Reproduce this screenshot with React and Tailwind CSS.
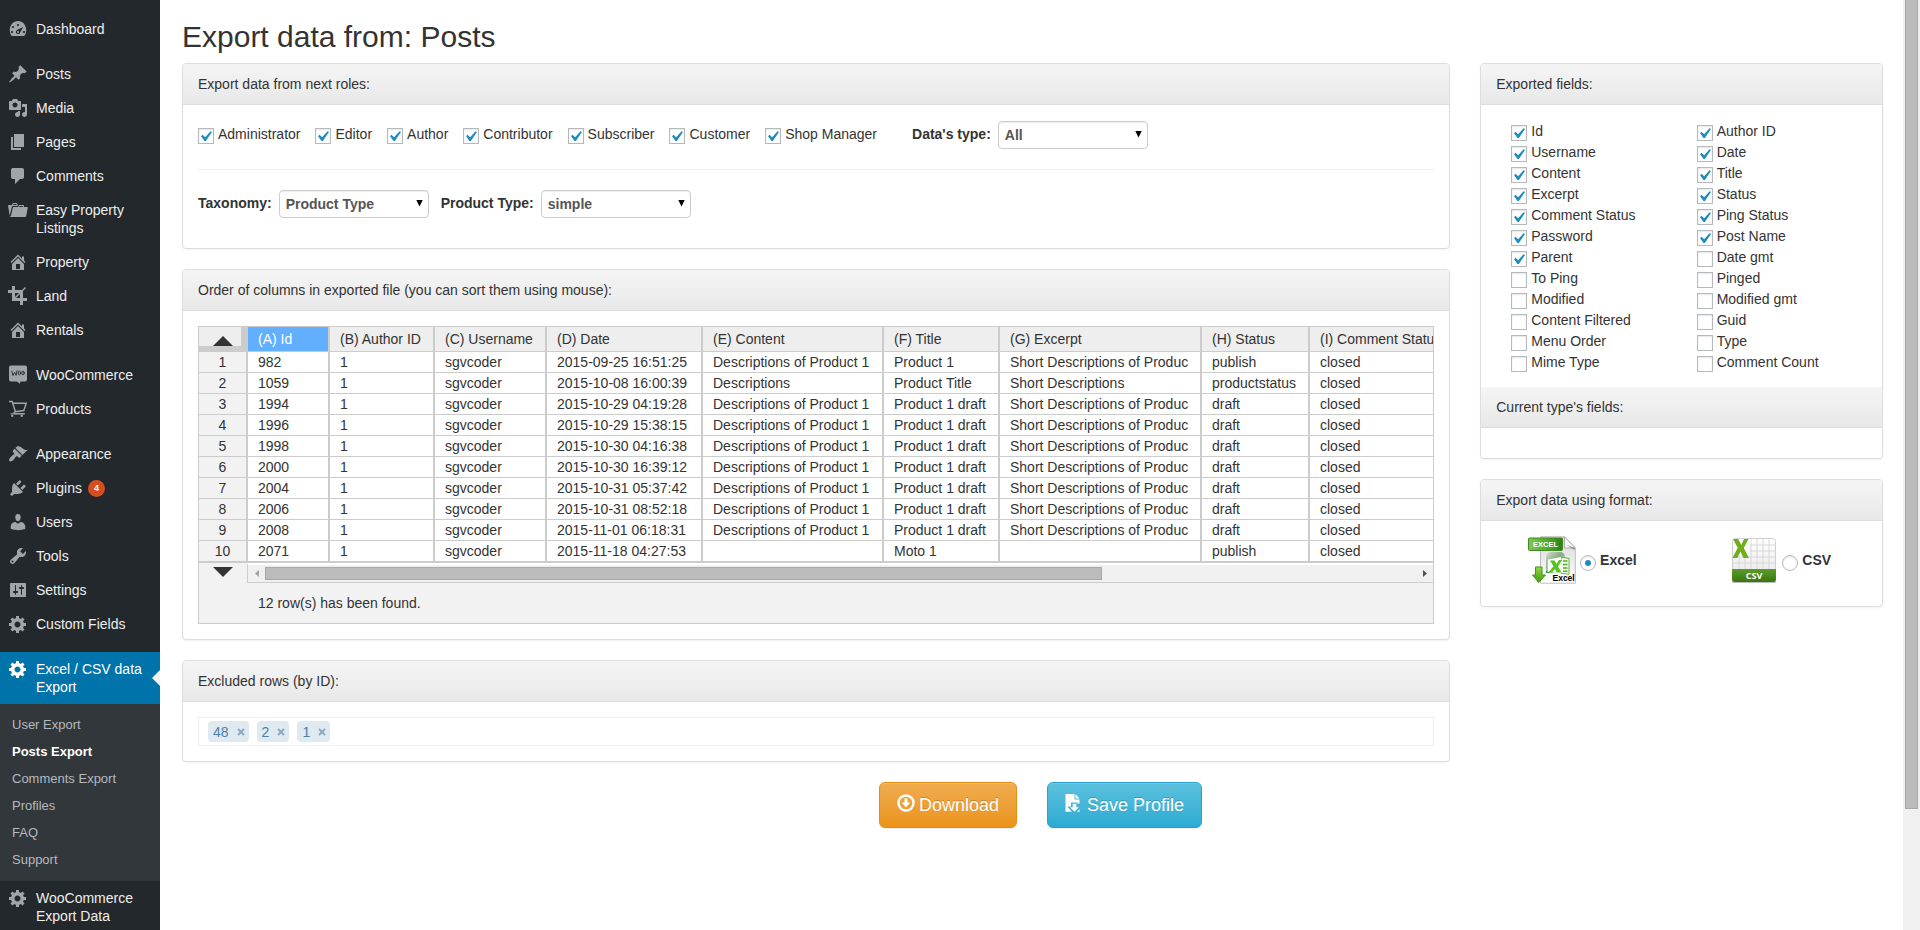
import React from "react";

const ICONS = {
  dashboard:
    "M3.76 17h12.48c1.34-1.63 2.01-3.82 2.01-6 0-5.07-3.68-9-8.25-9S1.75 5.93 1.75 11c0 2.18.67 4.37 2.01 6zM9 6c0-.55.45-1 1-1s1 .45 1 1c0 .56-.45 1-1 1s-1-.44-1-1zM4 8c0-.55.45-1 1-1s1 .45 1 1c0 .56-.45 1-1 1s-1-.44-1-1zm4.52 3.4c.84-.83 6.51-3.5 6.51-3.5s-2.66 5.68-3.49 6.51c-.84.84-2.18.84-3.02 0-.83-.83-.83-2.18 0-3.01zM3 13c0-.55.45-1 1-1s1 .45 1 1c0 .56-.45 1-1 1s-1-.44-1-1zm6 0c0-.55.45-1 1-1s1 .45 1 1c0 .56-.45 1-1 1s-1-.44-1-1zm6 0c0-.55.45-1 1-1s1 .45 1 1c0 .56-.45 1-1 1s-1-.44-1-1z",
  post: "M10.44 3.02l1.82-1.82 6.36 6.35-1.83 1.82c-1.05-.68-2.48-.57-3.41.36l-.75.75c-.92.93-1.04 2.35-.35 3.41l-1.83 1.82-2.41-2.41-2.8 2.79c-.42.42-3.38 2.71-3.8 2.29s1.86-3.39 2.28-3.81l2.79-2.79L4.1 9.36l1.83-1.82c1.05.69 2.48.57 3.4-.36l.75-.75c.93-.92 1.05-2.35.36-3.41z",
  media:
    "M13 11V4c0-.55-.45-1-1-1h-1.67L9 1H5L3.67 3H2c-.55 0-1 .45-1 1v7c0 .55.45 1 1 1h10c.55 0 1-.45 1-1zM7 4.5c1.38 0 2.5 1.12 2.5 2.5S8.38 9.5 7 9.5 4.5 8.38 4.5 7 5.62 4.5 7 4.5zM14 6h5v10.5c0 1.38-1.12 2.5-2.5 2.5S14 17.88 14 16.5s1.12-2.5 2.5-2.5c.17 0 .34.02.5.05V9h-3V6zm-4 8.05V13h2v3.5c0 1.38-1.12 2.5-2.5 2.5S7 17.88 7 16.5 8.12 14 9.5 14c.17 0 .34.02.5.05z",
  page: "M6 15V2h10v13H6zm-1 1h8v2H3V5h2v11z",
  comments:
    "M5 2h9c1.1 0 2 .9 2 2v7c0 1.1-.9 2-2 2h-2l-5 5v-5H5c-1.1 0-2-.9-2-2V4c0-1.1.9-2 2-2z",
  portfolio:
    "M4 5H.78c-.37 0-.74.32-.69.84l1.56 9.99S3.5 8.47 3.86 6.7c.11-.53.61-.7.98-.7H10s-.7-2.08-.77-2.31C9.11 3.25 8.89 3 8.45 3H5.14c-.36 0-.7.23-.8.64C4.25 4.04 4 5 4 5zm4.88 0h-4s.42-1 .87-1h2.13c.48 0 1 1 1 1zM2.67 16.25c-.31.47-.76.75-1.26.75h15.73c.54 0 .92-.31 1.03-.83.44-2.19 1.68-8.44 1.68-8.44.07-.5-.3-.73-.62-.73H16V5.53c0-.16-.26-.53-.66-.53h-3.76c-.52 0-.87.58-.87.58L10 7H5.59c-.32 0-.63.19-.69.5 0 0-1.59 6.7-1.72 7.33-.07.37-.22.99-.51 1.42zM15.38 7H11s.58-1 1.13-1h2.29c.71 0 .96 1 .96 1z",
  home: "M16 8.5l1.53 1.53-1.06 1.06L10 4.6l-6.47 6.49-1.06-1.06L10 2.5l4 4v-2h2v4zm-6-2.46l6 5.99V18H4v-5.97zM12 17v-5H8v5h4z",
  crop: "M19 12v3h-4v4h-3v-4H4V7H0V4h4V0h3v4h7l3-3 1 1-3 3v7h4zm-8-5H7v4zm-3 5h4V8z",
  appearance:
    "M14.48 11.06L7.41 3.99l1.5-1.5c.5-.56 2.3-.47 3.51.32 1.21.8 1.43 1.28 2.91 2.1 1.18.64 2.45 1.26 4.45.85zm-.71.71L6.7 4.7 4.93 6.47c-.39.39-.39 1.02 0 1.41l1.06 1.06c.39.39.39 1.03 0 1.42-.6.6-1.43 1.11-2.21 1.69-.35.26-.7.53-1.01.84C1.43 14.23.4 16.08 1.4 17.07c.99 1 2.84-.03 4.18-1.36.31-.31.58-.66.85-1.02.57-.78 1.08-1.61 1.69-2.21.39-.39 1.02-.39 1.41 0l1.06 1.06c.39.39 1.02.39 1.41 0z",
  plugins:
    "M13.11 4.36L9.87 7.6 8 5.73l3.24-3.24c.35-.34 1.05-.2 1.56.32.52.51.66 1.21.31 1.55zm-8 1.77l.91-1.12 9.01 9.01-1.19.84c-.71.71-2.63 1.16-3.82 1.16H6.14L4.9 17.26c-.59.59-1.54.59-2.12 0-.59-.58-.59-1.53 0-2.12l1.24-1.24v-3.88c0-1.13.4-3.19 1.09-3.89zm7.26 3.97l3.24-3.24c.34-.35 1.04-.21 1.55.31.52.51.66 1.21.31 1.55l-3.24 3.25z",
  users:
    "M10 9.25c-2.27 0-2.73-3.44-2.73-3.44C7 4.02 7.82 2 9.97 2c2.16 0 2.98 2.02 2.71 3.81 0 0-.41 3.44-2.68 3.44zm0 2.57L12.72 10c2.39 0 4.52 2.33 4.52 4.53v2.49s-3.65 1.13-7.24 1.13c-3.65 0-7.24-1.13-7.24-1.13v-2.49c0-2.25 1.94-4.48 4.47-4.48z",
  tools:
    "M16.68 9.77c-1.34 1.34-3.3 1.67-4.95.99l-5.41 6.52c-.99.99-2.59.99-3.58 0s-.99-2.59 0-3.57l6.52-5.42c-.68-1.65-.35-3.61.99-4.95 1.28-1.28 3.12-1.62 4.72-1.06l-2.89 2.89 2.82 2.82 2.86-2.87c.53 1.58.18 3.39-1.08 4.65zM3.81 16.21c.4.39 1.04.39 1.43 0 .4-.4.4-1.04 0-1.43-.39-.4-1.03-.4-1.43 0-.39.39-.39 1.03 0 1.43z",
  settings:
    "M18 16V4c0-.55-.45-1-1-1H3c-.55 0-1 .45-1 1v12c0 .55.45 1 1 1h14c.55 0 1-.45 1-1zM8 11h1c.55 0 1 .45 1 1s-.45 1-1 1H8v1.5c0 .28-.22.5-.5.5s-.5-.22-.5-.5V13H6c-.55 0-1-.45-1-1s.45-1 1-1h1V5.5c0-.28.22-.5.5-.5s.5.22.5.5V11zm5-2h-1c-.55 0-1-.45-1-1s.45-1 1-1h1V5.5c0-.28.22-.5.5-.5s.5.22.5.5V7h1c.55 0 1 .45 1 1s-.45 1-1 1h-1v5.5c0 .28-.22.5-.5.5s-.5-.22-.5-.5V9z",
  generic:
    "M18 12h-2.18c-.17.7-.44 1.35-.81 1.93l1.54 1.54-2.1 2.1-1.54-1.54c-.58.36-1.23.63-1.91.79V19H8v-2.18c-.68-.16-1.33-.43-1.91-.79l-1.54 1.54-2.12-2.12 1.54-1.54c-.36-.58-.63-1.23-.79-1.91H1V9.03h2.17c.16-.7.44-1.35.8-1.94L2.43 5.55l2.1-2.1 1.54 1.54c.58-.37 1.24-.64 1.93-.81V2h3v2.18c.68.16 1.33.43 1.91.79l1.54-1.54 2.12 2.12-1.54 1.54c.36.59.64 1.24.8 1.94H18V12zm-8.5 1.5c1.66 0 3-1.34 3-3s-1.34-3-3-3-3 1.34-3 3 1.34 3 3 3z",
};

function MenuIcon({ name }) {
  if (name === "woo") {
    return (
      <svg viewBox="0 0 20 20" className="h-5 w-5">
        <path
          fill="currentColor"
          d="M3 0.5h14a2 2 0 0 1 2 2v12a2 2 0 0 1-2 2h-4.500l-.6 2.300-3-2.300H3a2 2 0 0 1-2-2v-12a2 2 0 0 1 2-2z"
        />
        <g fill="none" stroke="#23282d" strokeWidth="0.900" strokeLinecap="round" strokeLinejoin="round">
          <path d="M3.800 6.200l1.200 4.300 1.700-3.100 1.400 2.900 1-4.500" />
          <ellipse cx="11.400" cy="8" rx="1.200" ry="1.900" />
          <ellipse cx="15" cy="8" rx="1.200" ry="1.900" />
        </g>
      </svg>
    );
  }
  if (name === "cart") {
    return (
      <svg viewBox="0 0 20 20" className="h-5 w-5" fill="none" stroke="currentColor" strokeWidth="1.400">
        <path d="M1 2.500h3.200l3.200 10.200M5 4.200h13.200l-2.400 7.300L7 12.800c-1.200.4-1.200 2 .2 2h9.600" />
        <path d="M2.500 14.800h5" strokeWidth="1" />
        <circle cx="13.800" cy="16.800" r="1.200" fill="currentColor" stroke="none" />
        <circle cx="4.200" cy="16.800" r="1.200" fill="currentColor" stroke="none" />
      </svg>
    );
  }
  return (
    <svg viewBox="0 0 20 20" className="h-5 w-5" fill="currentColor">
      <path d={ICONS[name]} />
    </svg>
  );
}

function MenuItem({ icon, label, active = false, badge }) {
  return (
    <li className={active ? "relative bg-[#0073aa] text-white" : "text-[#eee]"}>
      <a href="#" className="flex items-start">
        <span className={active ? "flex w-9 shrink-0 justify-center py-[7px] text-white" : "flex w-9 shrink-0 justify-center py-[7px] text-[#a0a5aa]"}>
          <MenuIcon name={icon} />
        </span>
        <span className="flex items-center gap-1.5 py-2 pr-2 text-sm leading-[18px]">
          {label}
          {badge && (
            <span className="flex h-[17px] w-[17px] items-center justify-center rounded-full bg-[#d54e21] text-[9px] font-bold text-white">
              {badge}
            </span>
          )}
        </span>
      </a>
      {active && (
        <svg viewBox="0 0 8 16" className="absolute top-[18px] right-0 h-4 w-2" fill="#f1f1f1">
          <path d="M8 0L0 8l8 8z" />
        </svg>
      )}
    </li>
  );
}

const MENU_GROUPS = [
  [["dashboard", "Dashboard"]],
  [
    ["post", "Posts"],
    ["media", "Media"],
    ["page", "Pages"],
    ["comments", "Comments"],
    ["portfolio", "Easy Property Listings"],
    ["home", "Property"],
    ["crop", "Land"],
    ["home", "Rentals"],
  ],
  [
    ["woo", "WooCommerce"],
    ["cart", "Products"],
  ],
  [
    ["appearance", "Appearance"],
    ["plugins", "Plugins", "4"],
    ["users", "Users"],
    ["tools", "Tools"],
    ["settings", "Settings"],
    ["generic", "Custom Fields"],
  ],
];

const SUBMENU = ["User Export", "Posts Export", "Comments Export", "Profiles", "FAQ", "Support"];

function Sidebar() {
  return (
    <nav className="w-40 shrink-0 bg-[#23282d] pt-3">
      <div className="flex flex-col gap-[11px]">
        {MENU_GROUPS.map((group, i) => (
          <ul key={i}>
            {group.map(([icon, label, badge]) => (
              <MenuItem key={label} icon={icon} label={label} badge={badge} />
            ))}
          </ul>
        ))}
        <ul>
          <MenuItem icon="generic" label="Excel / CSV data Export" active />
          <li className="bg-[#32373c] pt-[7px] pb-2">
            <ul>
              {SUBMENU.map((label) => (
                <li key={label}>
                  <a
                    href="#"
                    className={
                      label === "Posts Export"
                        ? "block px-3 text-[13px] leading-[27px] font-bold text-white"
                        : "block px-3 text-[13px] leading-[27px] text-[#b4b9be]"
                    }
                  >
                    {label}
                  </a>
                </li>
              ))}
            </ul>
          </li>
          <MenuItem icon="generic" label="WooCommerce Export Data" />
        </ul>
      </div>
    </nav>
  );
}

function PanelHeading({ children }) {
  return (
    <h2 className="border-b border-[#ddd] bg-gradient-to-b from-[#f5f5f5] to-[#e8e8e8] px-[15px] py-2.5 text-sm leading-5">
      {children}
    </h2>
  );
}

function Panel({ children }) {
  return (
    <section className="mb-5 overflow-hidden rounded border border-[#ddd] bg-white shadow-[0_1px_2px_rgba(0,0,0,0.05)]">
      {children}
    </section>
  );
}

function Check({ label, checked = true }) {
  return (
    <label className="flex h-[21px] items-start gap-1 text-sm leading-[23px] whitespace-nowrap">
      <span className="relative mt-[5px] h-4 w-4 shrink-0">
        <input
          type="checkbox"
          defaultChecked={checked}
          className="peer block h-4 w-4 appearance-none border border-[#b4b9be] bg-white shadow-[inset_0_1px_2px_rgba(0,0,0,0.1)]"
        />
        <svg
          viewBox="0 0 20 20"
          className="pointer-events-none absolute -top-0.5 -left-[3px] hidden h-[21px] w-[21px] peer-checked:block"
          fill="#1e8cbe"
        >
          <path d="M14.83 4.89l1.34.94-5.81 8.38H9.02L5.78 9.67l1.34-1.25 2.57 2.4z" />
        </svg>
      </span>
      {label}
    </label>
  );
}

function Dropdown({ id, label, value }) {
  return (
    <div className="flex items-start gap-[7px]">
      <label htmlFor={id} className="text-sm leading-[26px] font-bold">
        {label}
      </label>
      <div className="relative">
        <select
          id={id}
          defaultValue={value}
          className="block h-7 w-[150px] appearance-none rounded border border-[#ccc] bg-white px-1.5 text-sm font-bold text-[#555] shadow-[inset_0_1px_1px_rgba(0,0,0,0.07)]"
        >
          <option>{value}</option>
        </select>
        <svg viewBox="0 0 7 7" className="pointer-events-none absolute top-2.5 right-1.5 h-[7px] w-[7px]">
          <path d="M0.300 0h6.400L3.500 6.600z" />
        </svg>
      </div>
    </div>
  );
}

const ROLES = ["Administrator", "Editor", "Author", "Contributor", "Subscriber", "Customer", "Shop Manager"];

const COLUMNS = [
  ["(A) Id", "w-[82px]"],
  ["(B) Author ID", "w-[105px]"],
  ["(C) Username", "w-[112px]"],
  ["(D) Date", "w-[156px]"],
  ["(E) Content", "w-[181px]"],
  ["(F) Title", "w-[116px]"],
  ["(G) Excerpt", "w-[202px]"],
  ["(H) Status", "w-[108px]"],
  ["(I) Comment Status", "w-[160px]"],
];

const LONG = "Descriptions of Product 1";
const SHORT = "Short Descriptions of Produc";
const DRAFT = "Product 1 draft";

const ROWS = [
  ["982", "1", "sgvcoder", "2015-09-25 16:51:25", LONG, "Product 1", SHORT, "publish", "closed"],
  ["1059", "1", "sgvcoder", "2015-10-08 16:00:39", "Descriptions", "Product Title", "Short Descriptions", "productstatus", "closed"],
  ["1994", "1", "sgvcoder", "2015-10-29 04:19:28", LONG, DRAFT, SHORT, "draft", "closed"],
  ["1996", "1", "sgvcoder", "2015-10-29 15:38:15", LONG, DRAFT, SHORT, "draft", "closed"],
  ["1998", "1", "sgvcoder", "2015-10-30 04:16:38", LONG, DRAFT, SHORT, "draft", "closed"],
  ["2000", "1", "sgvcoder", "2015-10-30 16:39:12", LONG, DRAFT, SHORT, "draft", "closed"],
  ["2004", "1", "sgvcoder", "2015-10-31 05:37:42", LONG, DRAFT, SHORT, "draft", "closed"],
  ["2006", "1", "sgvcoder", "2015-10-31 08:52:18", LONG, DRAFT, SHORT, "draft", "closed"],
  ["2008", "1", "sgvcoder", "2015-11-01 06:18:31", LONG, DRAFT, SHORT, "draft", "closed"],
  ["2071", "1", "sgvcoder", "2015-11-18 04:27:53", "", "Moto 1", "", "publish", "closed"],
];

function DataGrid() {
  return (
    <div className="overflow-hidden border border-[#ccc] bg-[#f2f2f2]">
      <div className="overflow-hidden border-b border-[#ccc]">
        <table className="w-[1271px] table-fixed border-separate border-spacing-0 text-sm">
          <thead>
            <tr className="h-[25px]">
              <th className="w-[49px] border-r-[7px] border-b-[6px] border-[#ccc] bg-[#eee] p-0 align-bottom">
                <button type="button" aria-label="Scroll up" className="ml-3.5 block h-2.5 w-5">
                  <svg viewBox="0 0 20 10" className="h-2.5 w-5" fill="#333">
                    <path d="M10 0l10 10H0z" />
                  </svg>
                </button>
              </th>
              {COLUMNS.map(([name, width], i) => (
                <th
                  key={name}
                  className={`${width} border-r-2 border-b border-[#ccc] p-0 px-2.5 text-left leading-6 font-normal whitespace-nowrap ${
                    i === 0 ? "bg-[#62afff] text-white" : "bg-[#eee]"
                  }`}
                >
                  {name}
                </th>
              ))}
            </tr>
          </thead>
          <tbody>
            {ROWS.map((row, r) => (
              <tr key={row[0]} className="h-[21px]">
                <th className="border-r-2 border-b border-[#ccc] bg-[#f2f2f2] p-0 text-center leading-5 font-normal">
                  {r + 1}
                </th>
                {row.map((cell, c) => (
                  <td key={c} className="border-r-2 border-b border-[#ccc] bg-white p-0 px-2.5 leading-5">
                    <div className="overflow-hidden whitespace-nowrap">{cell}</div>
                  </td>
                ))}
              </tr>
            ))}
          </tbody>
        </table>
      </div>
      <div className="flex h-5">
        <div className="w-12 shrink-0 pt-1">
          <button type="button" aria-label="Scroll down" className="ml-3.5 block h-2.5 w-5">
            <svg viewBox="0 0 20 10" className="h-2.5 w-5" fill="#333">
              <path d="M0 0h20L10 10z" />
            </svg>
          </button>
        </div>
        <div className="flex flex-1 items-stretch border-t-2 border-b border-l border-[#ccc] border-t-white bg-[#f0f0f0] py-0.5">
          <span className="flex w-[17px] items-center justify-center">
            <svg viewBox="0 0 4 7" className="h-[7px] w-1" fill="#a3a3a3">
              <path d="M4 0v7L0 3.500z" />
            </svg>
          </span>
          <div className="flex-1">
            <div className="h-full w-8/11 border border-[#a8a8a8] bg-[#bcbcbc]" />
          </div>
          <span className="flex w-[17px] items-center justify-center">
            <svg viewBox="0 0 4 7" className="h-[7px] w-1" fill="#505050">
              <path d="M0 0v7l4-3.500z" />
            </svg>
          </span>
        </div>
      </div>
      <p className="pt-2.5 pb-2.5 pl-[59px] text-sm leading-5">12 row(s) has been found.</p>
    </div>
  );
}

function ExcludedRows() {
  return (
    <div className="flex h-[29px] items-center gap-2 border border-[#eee] px-[9px]">
      {["48", "2", "1"].map((id) => (
        <span key={id} className="flex h-[21px] items-center gap-2 rounded-sm bg-[#dfe9f0] pr-1 pl-[5px] text-sm text-[#4b7fa8]">
          {id}
          <button type="button" aria-label={`Remove ${id}`} className="block">
            <svg viewBox="0 0 8 8" className="h-2 w-2" stroke="#87a8bf" strokeWidth="1.800">
              <path d="M1 1l6 6M7 1L1 7" />
            </svg>
          </button>
        </span>
      ))}
    </div>
  );
}

const FIELDS = [
  ["Id", true],
  ["Author ID", true],
  ["Username", true],
  ["Date", true],
  ["Content", true],
  ["Title", true],
  ["Excerpt", true],
  ["Status", true],
  ["Comment Status", true],
  ["Ping Status", true],
  ["Password", true],
  ["Post Name", true],
  ["Parent", true],
  ["Date gmt", false],
  ["To Ping", false],
  ["Pinged", false],
  ["Modified", false],
  ["Modified gmt", false],
  ["Content Filtered", false],
  ["Guid", false],
  ["Menu Order", false],
  ["Type", false],
  ["Mime Type", false],
  ["Comment Count", false],
];

function ExcelIcon() {
  return (
    <svg viewBox="0 0 48 48" className="h-12 w-12" fontFamily="Liberation Sans, Arial, sans-serif" fontWeight="bold">
      <defs>
        <linearGradient id="xl-page" x1="0" y1="0" x2="0" y2="1">
          <stop offset="0" stopColor="#d8d8d8" />
          <stop offset="1" stopColor="#ffffff" />
        </linearGradient>
        <linearGradient id="xl-tag" x1="0" y1="0" x2="1" y2="0">
          <stop offset="0" stopColor="#7cc850" />
          <stop offset="0.600" stopColor="#4fa52a" />
          <stop offset="1" stopColor="#2f7d16" />
        </linearGradient>
        <linearGradient id="xl-arrow" x1="0" y1="0" x2="0" y2="1">
          <stop offset="0" stopColor="#8fdc3c" />
          <stop offset="1" stopColor="#3f9a14" />
        </linearGradient>
        <linearGradient id="xl-box" x1="0" y1="0" x2="1" y2="1">
          <stop offset="0" stopColor="#d5ddd2" />
          <stop offset="0.450" stopColor="#86a983" />
          <stop offset="1" stopColor="#dfe9dc" />
        </linearGradient>
      </defs>
      <path d="M12.500 0.800h24L47.300 12v35.200H12.500z" fill="url(#xl-page)" stroke="#bdbdbd" />
      <path d="M36.500 0.800L47.300 12H36.500z" fill="#fafafa" stroke="#a8a8a8" />
      <path d="M38 8.500L46.500 12v2z" fill="#8a8a8a" />
      <rect x="18" y="16" width="19" height="21" rx="5" fill="url(#xl-box)" />
      <path d="M18 37h17l3-9c-8 3-14 2-20 7z" fill="#3f8f3a" />
      <path d="M33 21.500l8 .8v16l-9-1.300z" fill="#f4fff0" stroke="#5fb63a" />
      <path d="M35 25h4.500M35 28.500h4.500M35 32h4.500M35 35.300h4.500" stroke="#4fae22" strokeWidth="1.600" />
      <path d="M20 23.500l13-2.500v16.500L19.500 36z" fill="#f8fff4" />
      <path d="M22 24.500h4.500l2 3.500 2.500-4h3l-4 6.500 3.500 6h-5l-1.500-3.500-3 3.200h-3.500l5-6z" fill="#57c322" />
      <rect x="0.500" y="2" width="34" height="12.500" rx="1" fill="url(#xl-tag)" stroke="#3e8c20" />
      <text x="17.500" y="11.200" fontSize="7.500" textAnchor="middle" fill="#fff">EXCEL</text>
      <path d="M7.500 31h6.500v8h3.500L10.700 46.500 4.500 39h3z" fill="url(#xl-arrow)" stroke="#4a8f1e" />
      <text x="24.500" y="45.300" fontSize="8.500" fill="#000">Excel</text>
    </svg>
  );
}

function CsvIcon() {
  return (
    <svg viewBox="0 0 48 48" className="h-12 w-12" fontFamily="Open Sans, Liberation Sans, sans-serif" fontWeight="bold">
      <defs>
        <linearGradient id="csv-band" x1="0" y1="0" x2="0" y2="1">
          <stop offset="0" stopColor="#5f9a2a" />
          <stop offset="0.500" stopColor="#4a8a1c" />
          <stop offset="1" stopColor="#3b7412" />
        </linearGradient>
        <linearGradient id="csv-page" x1="0" y1="0" x2="0" y2="1">
          <stop offset="0" stopColor="#ffffff" />
          <stop offset="1" stopColor="#e6e6e6" />
        </linearGradient>
      </defs>
      <rect x="2" y="44" width="44" height="3" rx="1.500" fill="#bcbcbc" />
      <rect x="2.500" y="2.500" width="43" height="42" rx="3" fill="url(#csv-page)" stroke="#cfcfcf" />
      <path
        d="M20 9h25M20 15h25M3 21h42M3 27h42M9 21v12M15 21v12M21 3v30M27 3v30M33 3v30M39 3v30"
        stroke="#d2d2d2"
        strokeWidth="0.800"
      />
      <path
        d="M3 3h5.200l3.100 6L14 3h4.500l-4.700 9 5 10h-5.300l-3-6.600L7.300 22H2.500l5.200-10.300z"
        fill="#72ad1c"
      />
      <path d="M2 33h44v10a3 3 0 0 1-3 3H5a3 3 0 0 1-3-3z" fill="url(#csv-band)" />
      <text x="24" y="42.500" fontSize="9" textAnchor="middle" fill="#fff">CSV</text>
    </svg>
  );
}

function FormatOption({ icon, label, checked = false }) {
  return (
    <label className="flex items-center gap-1 text-sm font-bold">
      {icon}
      <span className="mt-1.5 h-4 w-4">
        <input
          type="radio"
          name="format"
          defaultChecked={checked}
          className="grid h-4 w-4 appearance-none place-items-center rounded-full border border-[#b4b9be] bg-white shadow-[inset_0_1px_2px_rgba(0,0,0,0.1)] before:h-1.5 before:w-1.5 before:rounded-full checked:before:bg-[#1e8cbe] checked:before:content-['']"
        />
      </span>
      {label}
    </label>
  );
}

function Actions() {
  return (
    <div className="flex justify-center gap-[30px] pl-4">
      <button
        type="button"
        className="flex h-[46px] items-center gap-1 rounded-md border border-[#e38d13] bg-gradient-to-b from-[#f0ad4e] to-[#eb9316] px-[17px] text-lg text-white shadow-[inset_0_1px_0_rgba(255,255,255,0.15),0_1px_1px_rgba(0,0,0,0.075)] [text-shadow:0_-1px_0_rgba(0,0,0,0.2)]"
      >
        <svg viewBox="0 0 18 18" className="mb-1 h-[18px] w-[18px]">
          <circle cx="9" cy="9" r="7.500" fill="none" stroke="#fff" strokeWidth="2.400" />
          <path d="M7.500 4.500h3v4h2.800L9 13.500 4.700 8.500h2.800z" fill="#fff" />
        </svg>
        Download
      </button>
      <button
        type="button"
        className="flex h-[46px] items-center gap-1 rounded-md border border-[#28a4c9] bg-gradient-to-b from-[#5bc0de] to-[#2aabd2] px-[17px] text-lg text-white shadow-[inset_0_1px_0_rgba(255,255,255,0.15),0_1px_1px_rgba(0,0,0,0.075)] [text-shadow:0_-1px_0_rgba(0,0,0,0.2)]"
      >
        <svg viewBox="0 0 18 18" className="mb-1 h-[18px] w-[18px]" fill="#fff">
          <path d="M0.500 0h9v5.500h5V9.500H12.500V8.500H6v4H2.300L6.800 17.800H.5z" />
          <path d="M10.500 0l4 4.500h-4z" />
          <path d="M7.700 9.800h3.600v3.400h2.600L9.500 17.800l-4.400-4.600h2.600z" />
          <path d="M12 17.800l2.500-2.600v2.600z" />
        </svg>
        Save Profile
      </button>
    </div>
  );
}

export default function App() {
  return (
    <div className="flex h-screen overflow-hidden bg-white font-['Liberation_Sans',Arial,sans-serif] text-[#333]">
      <Sidebar />
      <main className="min-w-0 flex-1 pt-5 pr-5 pl-[22px]">
        <h1 className="mb-2.5 text-[30px] leading-[33px]">Export data from: Posts</h1>
        <div className="-mx-[15px] flex">
          <div className="w-3/4 px-[15px]">
            <Panel>
              <PanelHeading>Export data from next roles:</PanelHeading>
              <div className="px-[15px] pt-4 pb-[30px]">
                <div className="flex items-start gap-[35px]">
                  <div className="flex gap-[15px] pt-0.5">
                    {ROLES.map((role) => (
                      <Check key={role} label={role} />
                    ))}
                  </div>
                  <Dropdown id="data-type" label="Data's type:" value="All" />
                </div>
                <hr className="my-5 border-t border-[#eee]" />
                <div className="flex gap-3">
                  <Dropdown id="taxonomy" label="Taxonomy:" value="Product Type" />
                  <Dropdown id="product-type" label="Product Type:" value="simple" />
                </div>
              </div>
            </Panel>
            <Panel>
              <PanelHeading>Order of columns in exported file (you can sort them using mouse):</PanelHeading>
              <div className="p-[15px]">
                <DataGrid />
              </div>
            </Panel>
            <Panel>
              <PanelHeading>Excluded rows (by ID):</PanelHeading>
              <div className="p-[15px]">
                <ExcludedRows />
              </div>
            </Panel>
          </div>
          <div className="w-1/4 px-[15px]">
            <Panel>
              <PanelHeading>Exported fields:</PanelHeading>
              <div className="grid grid-cols-2 p-[15px]">
                {FIELDS.map(([label, checked]) => (
                  <div key={label} className="pl-[15px]">
                    <Check label={label} checked={checked} />
                  </div>
                ))}
              </div>
              <PanelHeading>Current type's fields:</PanelHeading>
              <div className="h-[30px]" />
            </Panel>
            <Panel>
              <PanelHeading>Export data using format:</PanelHeading>
              <div className="flex justify-around pt-[15px] pr-1 pb-[22px]">
                <FormatOption icon={<ExcelIcon />} label="Excel" checked />
                <FormatOption icon={<CsvIcon />} label="CSV" />
              </div>
            </Panel>
          </div>
        </div>
        <Actions />
      </main>
      <div className="w-[17px] shrink-0 bg-[#f0f0f0] px-0.5">
        <div className="h-[87%] border border-t-0 border-[#a8a8a8] bg-[#bcbcbc]" />
      </div>
    </div>
  );
}
